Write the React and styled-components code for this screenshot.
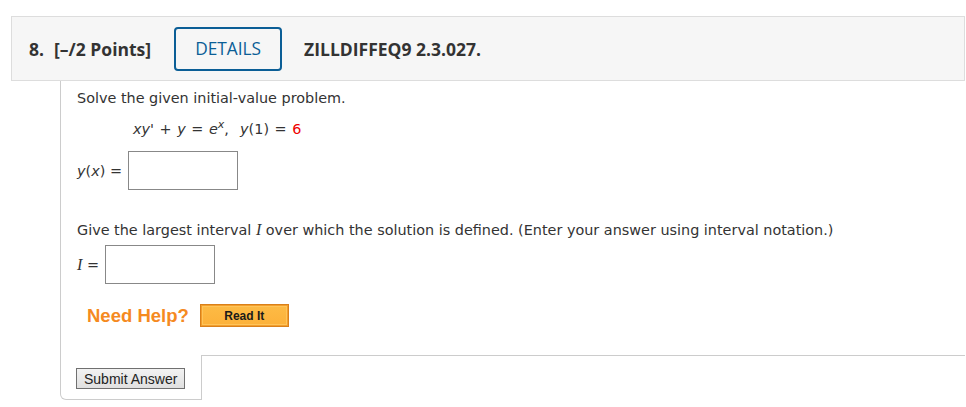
import React from 'react'
import styled, { createGlobalStyle } from 'styled-components'

const GlobalStyle = createGlobalStyle`
  html, body {
    margin: 0;
    padding: 0;
    background: #fff;
  }
  body {
    font-family: "DejaVu Sans", Verdana, sans-serif;
    color: #333;
  }
`

const Page = styled.div`
  padding: 16px 1px 0 11px;
`

const Header = styled.div`
  display: flex;
  align-items: center;
  height: 63px;
  padding-left: 17px;
  background: #f6f6f6;
  border: 1px solid #ddd;
  font-family: "Open Sans", "Liberation Sans", sans-serif;
  font-size: 17.5px;
  font-weight: 700;
  color: #333;
`

const Number = styled.span`
  margin-right: 10px;
`

const Points = styled.span`
  margin-right: 23px;
`

const DetailsButton = styled.button`
  box-sizing: border-box;
  width: 108px;
  height: 44px;
  margin-right: 22px;
  border: 2px solid #0b5e96;
  border-radius: 4px;
  background: transparent;
  color: #0b5e96;
  font-family: "Open Sans", "Liberation Sans", sans-serif;
  font-size: 17.3px;
  font-weight: 400;
`

const Panel = styled.div`
  margin-left: 49px;
`

const Body = styled.div`
  border-left: 1px solid #ccc;
  padding: 9px 0 0 16px;
  height: 265px;
  font-size: 14.4px;
`

const Line = styled.div`
  line-height: 17px;
`

const Equation = styled.div`
  line-height: 17px;
  margin: 14px 0 0 56px;
  word-spacing: 1px;
`

const Var = styled.i`
  font-style: italic;
`

const Sup = styled.sup`
  font-size: 11px;
  line-height: 0;
  vertical-align: 6px;
`

const SerifVar = styled.i`
  font-family: "Liberation Serif", "Times New Roman", serif;
  font-size: 16px;
`

const Red = styled.span`
  color: #e00;
`

const AnswerRow = styled.div`
  display: flex;
  align-items: center;
  gap: 6px;
  margin-top: ${p => p.$top}px;
`

const Input = styled.div`
  box-sizing: border-box;
  width: ${p => p.$w}px;
  height: 39px;
  border: 1px solid #888;
  background: #fff;
`

const HelpRow = styled.div`
  display: flex;
  align-items: center;
  gap: 11px;
  height: 23px;
  margin: 20px 0 0 10px;
`

const NeedHelp = styled.span`
  font-family: "Liberation Sans", Arial, sans-serif;
  font-size: 18.5px;
  font-weight: 700;
  color: #f58a1f;
`

const ReadIt = styled.button`
  box-sizing: border-box;
  width: 89px;
  height: 23px;
  padding: 0;
  background: linear-gradient(#fdbb45, #fcb13a);
  border: 1px solid #d9801a;
  box-shadow: inset 0 0 0 1px #f29e2c, inset 0 0 0 2px #fec45a;
  font-family: "Liberation Sans", Arial, sans-serif;
  font-size: 12px;
  font-weight: 700;
  color: #1a1a1a;
`

const Footer = styled.div`
  display: flex;
`

const SubmitCell = styled.div`
  box-sizing: border-box;
  width: 142px;
  height: 45px;
  padding: 13px 0 0 15px;
  border-left: 1px solid #ccc;
  border-right: 1px solid #ccc;
  border-bottom: 1px solid #ccc;
  border-bottom-left-radius: 6px;
`

const Rest = styled.div`
  flex: 1;
  border-top: 1px solid #ccc;
`

const SubmitButton = styled.button`
  box-sizing: border-box;
  height: 21px;
  padding: 0 7px;
  background: linear-gradient(#f2f2f2, #e0e0e0);
  border: 1px solid #707070;
  border-radius: 0;
  font-family: "Liberation Sans", Arial, sans-serif;
  font-size: 14px;
  color: #222;
`

export default function App() {
  return (
    <>
      <GlobalStyle />
      <Page>
        <Header>
          <Number>8.</Number>
          <Points>[–/2 Points]</Points>
          <DetailsButton>DETAILS</DetailsButton>
          <span>ZILLDIFFEQ9 2.3.027.</span>
        </Header>
        <Panel>
          <Body>
            <Line>Solve the given initial-value problem.</Line>
            <Equation>
              <Var>xy'</Var> + <Var>y</Var> = <Var>e</Var>
              <Sup><Var>x</Var></Sup>,&nbsp; <Var>y</Var>(1) = <Red>6</Red>
            </Equation>
            <AnswerRow $top={13}>
              <span><Var>y</Var>(<Var>x</Var>) =</span>
              <Input $w={110} />
            </AnswerRow>
            <AnswerRow $top={31}>
              <Line>
                Give the largest interval <SerifVar>I</SerifVar> over which the solution is defined. (Enter your answer using interval notation.)
              </Line>
            </AnswerRow>
            <AnswerRow $top={6}>
              <span><SerifVar>I</SerifVar> =</span>
              <Input $w={110} />
            </AnswerRow>
            <HelpRow>
              <NeedHelp>Need Help?</NeedHelp>
              <ReadIt>Read It</ReadIt>
            </HelpRow>
          </Body>
          <Footer>
            <SubmitCell>
              <SubmitButton>Submit Answer</SubmitButton>
            </SubmitCell>
            <Rest />
          </Footer>
        </Panel>
      </Page>
    </>
  )
}
